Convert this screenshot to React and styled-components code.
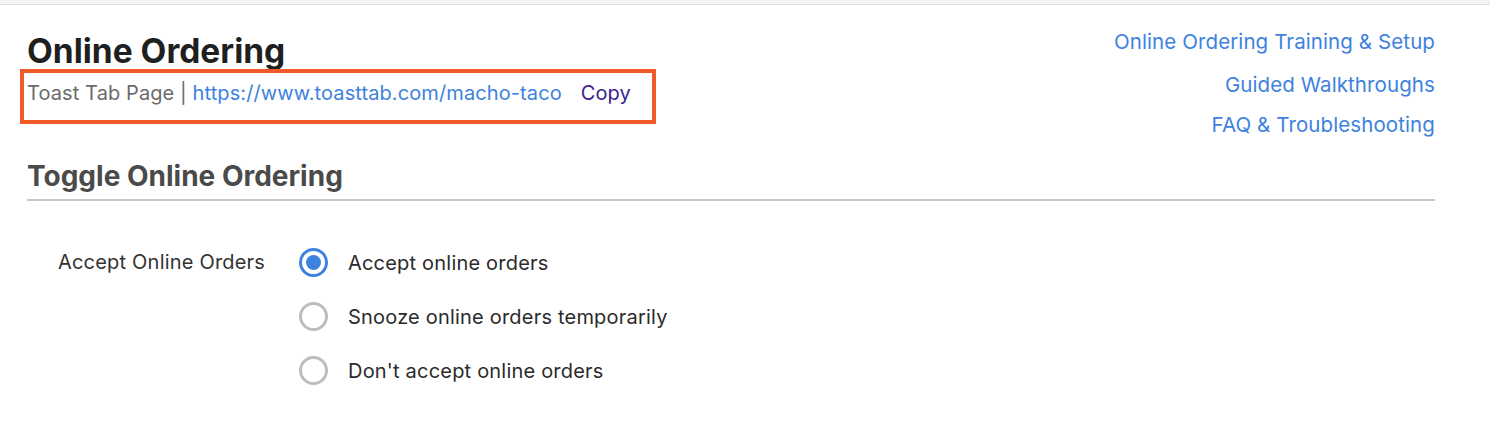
import React, {useState} from 'react'
import styled, {createGlobalStyle} from 'styled-components'

const GlobalStyle = createGlobalStyle`
  body {
    margin: 0;
    background: #ffffff;
    font-family: Inter, "Open Sans", sans-serif;
  }
`;

const TopBar = styled.div`
  height: 4px;
  background: #f4f4f6;
  border-bottom: 1px solid #dcdce1;
`;

const Content = styled.div`
  padding: 0 55px 0 27px;
`;

const Header = styled.div`
  display: flex;
  justify-content: space-between;
  align-items: flex-start;
`;

const Title = styled.h1`
  margin: 28px 0 0;
  font-size: 33.5px;
  line-height: 36px;
  font-weight: 700;
  color: #1f1f1f;
`;

const LinkBox = styled.div`
  display: inline-flex;
  align-items: center;
  margin: 0 0 0 -7px;
  padding: 8px 21px 15px 3px;
  border: 4px solid #f05a28;
  font-size: 20px;
  line-height: 24px;
  letter-spacing: 0.1px;
`;

const Muted = styled.span`
  color: #6b6b6b;
  white-space: pre;
`;

const Url = styled.a`
  color: #3d82de;
  text-decoration: none;
`;

const CopyButton = styled.button`
  margin-left: 19px;
  padding: 0;
  border: none;
  background: none;
  font: inherit;
  letter-spacing: inherit;
  color: #3b2190;
  cursor: pointer;
`;

const HelpLinks = styled.div`
  display: flex;
  flex-direction: column;
  align-items: flex-end;
  padding-top: 24px;
`;

const HelpLink = styled.a`
  font-size: 20.5px;
  line-height: 26px;
  letter-spacing: 0.1px;
  color: #3d82de;
  text-decoration: none;
  margin-bottom: ${(p) => p.$gap}px;
`;

const SectionTitle = styled.h2`
  margin: 22px 0 0;
  padding-bottom: 7px;
  font-size: 28px;
  line-height: 32px;
  font-weight: 700;
  color: #4a4a4a;
  border-bottom: 2px solid #cac8cf;
`;

const FormRow = styled.div`
  display: flex;
  align-items: flex-start;
  padding: 47px 0 0 31px;
`;

const FieldLabel = styled.div`
  width: 241px;
  font-size: 20px;
  line-height: 28px;
  letter-spacing: 0.2px;
  color: #333333;
`;

const Options = styled.div`
  display: flex;
  flex-direction: column;
  gap: 25px;
`;

const Option = styled.label`
  display: flex;
  align-items: center;
  gap: 20px;
  font-size: 20px;
  line-height: 28px;
  letter-spacing: 0.2px;
  color: #2b2b2b;
  cursor: pointer;
`;

const Radio = styled.span`
  box-sizing: border-box;
  width: 29px;
  height: 29px;
  border-radius: 50%;
  border: 3px solid ${(p) => (p.$checked ? '#3d82de' : '#bdbdbd')};
  display: flex;
  align-items: center;
  justify-content: center;

  &::after {
    content: '';
    width: 15px;
    height: 15px;
    border-radius: 50%;
    background: #3d82de;
    display: ${(p) => (p.$checked ? 'block' : 'none')};
  }
`;

const options = [
    'Accept online orders',
    'Snooze online orders temporarily',
    "Don't accept online orders",
];

const App = () => {
    const [selected, setSelected] = useState(0);

    return (
        <>
            <GlobalStyle/>
            <TopBar/>
            <Content>
                <Header>
                    <div>
                        <Title>Online Ordering</Title>
                        <LinkBox>
                            <Muted>Toast Tab Page | </Muted>
                            <Url href="#">https://www.toasttab.com/macho-taco</Url>
                            <CopyButton>Copy</CopyButton>
                        </LinkBox>
                    </div>
                    <HelpLinks>
                        <HelpLink href="#" $gap={17}>Online Ordering Training &amp; Setup</HelpLink>
                        <HelpLink href="#" $gap={14}>Guided Walkthroughs</HelpLink>
                        <HelpLink href="#" $gap={0}>FAQ &amp; Troubleshooting</HelpLink>
                    </HelpLinks>
                </Header>

                <SectionTitle>Toggle Online Ordering</SectionTitle>

                <FormRow>
                    <FieldLabel>Accept Online Orders</FieldLabel>
                    <Options>
                        {options.map((option, i) => (
                            <Option key={option} onClick={() => setSelected(i)}>
                                <Radio $checked={selected === i}/>
                                {option}
                            </Option>
                        ))}
                    </Options>
                </FormRow>
            </Content>
        </>
    )
}

export default App;
